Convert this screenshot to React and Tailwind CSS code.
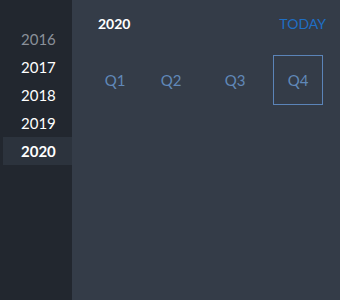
import React from 'react';

const years = [2016, 2017, 2018, 2019, 2020];
const quarters = [
  { label: 'Q1', ml: 'ml-[18px]' },
  { label: 'Q2', ml: 'ml-[6px]' },
  { label: 'Q3', ml: 'ml-[14px]' },
  { label: 'Q4', ml: 'ml-[13px]' },
];

const App = () => {
  const selected = 2020;
  return (
    <div className="flex h-[300px] w-[340px] bg-[#343c48] font-['Lato','Liberation_Sans',sans-serif]">
      <div className="flex w-[72px] flex-col bg-[#22272f] pt-[25px]">
        {years.map((y) => (
          <div
            key={y}
            className={
              y === selected
                ? 'ml-[3px] flex h-[28px] items-center bg-[#2c333d] pl-[18px] text-[15px] font-bold text-white'
                : `flex h-[28px] items-center pl-[21px] text-[15px] ${y === 2016 ? 'text-[#8a9099]' : 'text-white'}`
            }
          >
            {y}
          </div>
        ))}
      </div>
      <div className="flex flex-1 flex-col">
        <div className="flex items-center justify-between pl-[26px] pr-[14px] pt-[13px]">
          <span className="text-[14px] font-bold text-white">{selected}</span>
          <span className="text-[14px] text-[#1f6fc5]">TODAY</span>
        </div>
        <div className="mt-[21px] flex">
          {quarters.map((q) => (
            <div
              key={q.label}
              className={`${q.ml} flex h-[50px] w-[50px] items-center justify-center text-[15px] text-[#6088b8] ${
                q.label === 'Q4' ? 'border border-[#5b84b8]' : ''
              }`}
            >
              {q.label}
            </div>
          ))}
        </div>
      </div>
    </div>
  );
};

export default App;
